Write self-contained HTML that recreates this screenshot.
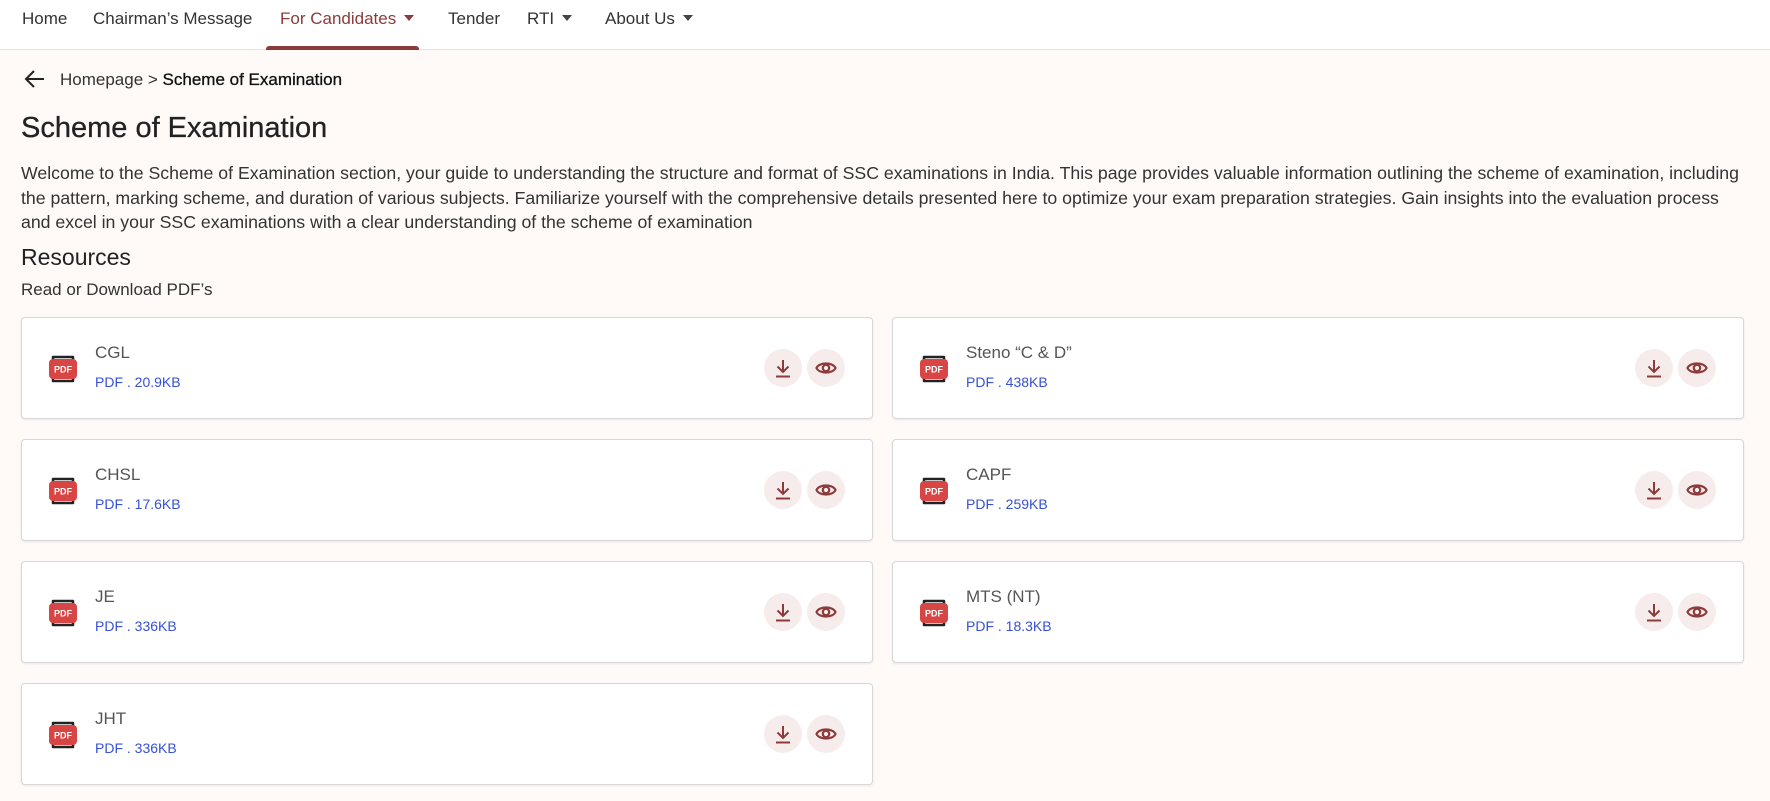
<!DOCTYPE html>
<html><head><meta charset="utf-8"><style>
*{box-sizing:border-box;margin:0;padding:0}
body{width:1770px;height:801px;overflow:hidden;background:#fff9f8;font-family:"Liberation Sans",sans-serif;color:#222;position:relative}
.nav{position:absolute;left:0;top:0;width:1770px;height:50px;background:#fff;border-bottom:1px solid #e2e2e2}
.nav span{position:absolute;top:9px;font-size:17px;color:#333;white-space:nowrap}
.nav .act{color:#8c3b3b}
.caret{display:inline-block;width:0;height:0;border-left:5px solid transparent;border-right:5px solid transparent;border-top:6px solid #444;margin-left:8px;vertical-align:3px}
.act .caret{border-top-color:#8c3b3b}
.ul{position:absolute;left:266px;top:46px;width:153px;height:4px;background:#8c3b3b;border-radius:3px 3px 0 0}
.t{position:absolute;white-space:nowrap}
.card{position:absolute;width:852px;height:102px;background:#fff;border:1px solid #d8d8d8;border-radius:4px;box-shadow:0 1px 2px rgba(0,0,0,.08)}
.card .ic{position:absolute;left:26px;top:36px}
.card .n{position:absolute;left:73px;top:25px;font-size:17px;color:#555}
.card .s{position:absolute;left:73px;top:56px;font-size:14px;color:#3650d8}
.btn{position:absolute;top:31px;width:38px;height:38px;border-radius:50%;background:#f7ecec}
.b1{right:70px}.b2{right:27px}
.btn svg{position:absolute;left:8px;top:8px}
</style></head><body>
<div class="nav">
<span style="left:22px">Home</span>
<span style="left:93px">Chairman’s Message</span>
<span class="act" style="left:280px">For Candidates<i class="caret"></i></span>
<span style="left:448px">Tender</span>
<span style="left:527px">RTI<i class="caret"></i></span>
<span style="left:605px">About Us<i class="caret"></i></span>
<div class="ul"></div>
</div>
<svg style="position:absolute;left:24px;top:69px" width="22" height="20" viewBox="0 0 22 20"><path d="M20 10H3M10 2L2 10l8 8" fill="none" stroke="#222" stroke-width="2"/></svg>
<div class="t" style="left:60px;top:70px;font-size:17px;color:#333">Homepage &gt; <span style="color:#111;-webkit-text-stroke:0.3px #111">Scheme of Examination</span></div>
<div class="t" style="left:21px;top:112px;font-size:29px;color:#222;-webkit-text-stroke:0.3px #222">Scheme of Examination</div>
<div class="t" style="left:21px;top:161px;font-size:17.7px;line-height:24.5px;color:#333">Welcome to the Scheme of Examination section, your guide to understanding the structure and format of SSC examinations in India. This page provides valuable information outlining the scheme of examination, including<br>the pattern, marking scheme, and duration of various subjects. Familiarize yourself with the comprehensive details presented here to optimize your exam preparation strategies. Gain insights into the evaluation process<br>and excel in your SSC examinations with a clear understanding of the scheme of examination</div>
<div class="t" style="left:21px;top:244px;font-size:23px;color:#222">Resources</div>
<div class="t" style="left:21px;top:280px;font-size:17px;color:#333">Read or Download PDF’s</div>

<div id="cards"></div>
<script>
var d=[["CGL","20.9KB",21,317],["Steno “C &amp; D”","438KB",892,317],["CHSL","17.6KB",21,439],["CAPF","259KB",892,439],["JE","336KB",21,561],["MTS (NT)","18.3KB",892,561],["JHT","336KB",21,683]];
var h="";
d.forEach(function(c){h+='<div class="card" style="left:'+c[2]+'px;top:'+c[3]+'px"><svg class="ic" width="30" height="30" viewBox="0 0 30 30"><path d="M5 3h20v24H5z" fill="none" stroke="#222" stroke-width="2.5" stroke-linejoin="round"/><rect x="1" y="5" width="28" height="20" rx="4" fill="#d84545"/><text x="15" y="18.5" font-size="9" font-family="Liberation Sans" font-weight="bold" fill="#fff" text-anchor="middle">PDF</text></svg><div class="n">'+c[0]+'</div><div class="s">PDF . '+c[1]+'</div><div class="btn b1"><svg width="22" height="22" viewBox="0 0 22 22"><path d="M11 3v12M5.5 9.5l5.5 5.5 5.5-5.5M4 19.5h14" fill="none" stroke="#8c3b3b" stroke-width="2"/></svg></div><div class="btn b2"><svg width="22" height="22" viewBox="0 0 22 22"><path d="M1.5 11C4 5 18 5 20.5 11C18 17 4 17 1.5 11Z" fill="none" stroke="#8c3b3b" stroke-width="2.2"/><circle cx="11" cy="11" r="3.2" fill="none" stroke="#8c3b3b" stroke-width="2.2"/></svg></div></div>';});
document.getElementById("cards").innerHTML=h;
</script>
</body></html>
